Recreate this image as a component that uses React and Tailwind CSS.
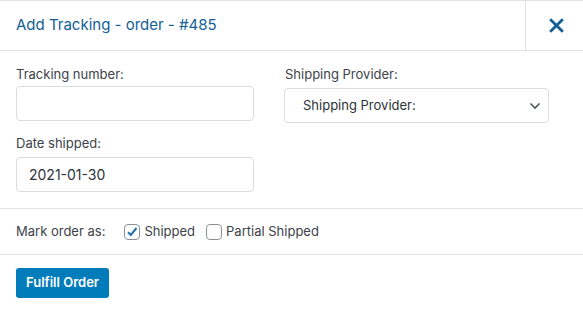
import React from "react";

export default function App() {
  return (
    <div
      className="w-[583px] h-[312px] bg-white text-[#3c434a] overflow-hidden"
      style={{ fontFamily: "Inter, 'Noto Sans', sans-serif" }}
    >
      {/* Header */}
      <div className="flex h-[51px] border-t border-b border-[#e2e2e2]">
        <div className="flex-1 flex items-center pl-4 text-[15px] text-[#135e96]">
          Add Tracking - order - #485
        </div>
        <button className="w-[58px] flex items-center justify-center pl-1 border-l border-[#e2e2e2]">
          <svg width="15" height="15" viewBox="0 0 14 14">
            <path d="M2 2 L12 12 M12 2 L2 12" stroke="#135e96" strokeWidth="2.6" strokeLinecap="square" />
          </svg>
        </button>
      </div>

      {/* Fields */}
      <div className="flex gap-[30px] px-4 pt-[15px] pb-[16px] border-b border-[#e2e2e2]">
        <div className="w-[238px] flex flex-col">
          <label className="text-[13px] leading-[16px]">Tracking number:</label>
          <input className="mt-[4px] h-[35px] border border-[#dcdcde] rounded-[4px] px-3 text-[14px] outline-none" />
          <label className="mt-[14px] text-[13px] leading-[16px]">Date shipped:</label>
          <input
            defaultValue="2021-01-30"
            className="mt-[6px] h-[35px] border border-[#dcdcde] rounded-[4px] px-3 text-[14px] text-[#2c3338] outline-none"
          />
        </div>
        <div className="w-[265px] flex flex-col">
          <label className="text-[13px] leading-[16px] pl-px">Shipping Provider:</label>
          <div className="mt-[6px] h-[35px] border border-[#dcdcde] rounded-[4px] flex items-center justify-between pl-[18px] pr-[7px] text-[13px] text-[#2c3338]">
            <span>Shipping Provider:</span>
            <svg width="12" height="8" viewBox="0 0 12 8">
              <path d="M1.5 1.5 L6 6 L10.5 1.5" stroke="#50575e" strokeWidth="1.6" fill="none" />
            </svg>
          </div>
        </div>
      </div>

      {/* Mark order */}
      <div className="flex items-center h-[46px] px-4 border-b border-[#e2e2e2] text-[13px]">
        <span>Mark order as:</span>
        <label className="flex items-center ml-[19px]">
          <span className="w-4 h-4 rounded-[4px] border border-[#8c8f94] flex items-center justify-center">
            <svg width="12" height="12" viewBox="0 0 12 12">
              <path d="M2 6.2 L4.8 9 L10.5 2" stroke="#2271b1" strokeWidth="2" fill="none" />
            </svg>
          </span>
          <span className="ml-[4px]">Shipped</span>
        </label>
        <label className="flex items-center ml-[11px]">
          <span className="w-4 h-4 rounded-[4px] border border-[#8c8f94]" />
          <span className="ml-[4px]">Partial Shipped</span>
        </label>
      </div>

      {/* Footer */}
      <div className="px-4 pt-[13px]">
        <button className="h-[30px] w-[93px] rounded-[3px] bg-[#007cba] text-white text-[13px] font-semibold">
          Fulfill Order
        </button>
      </div>
    </div>
  );
}
